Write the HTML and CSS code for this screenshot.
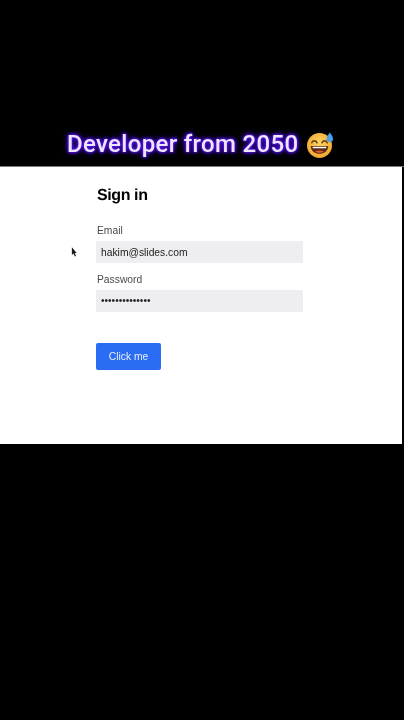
FILE: index.html
```
<!DOCTYPE html>
<html lang="en">
<head>
<meta charset="utf-8">
<title>Developer from 2050</title>
<link rel="stylesheet" href="styles.css">
</head>
<body>
<main class="screen">
  <header class="caption">
    <h2 class="caption-text">Developer from 2050</h2>
    <svg class="emoji" viewBox="0 0 28 28" aria-hidden="true">
      <defs>
        <radialGradient id="face" cx="50%" cy="40%" r="60%">
          <stop offset="0" stop-color="#fdd663"/>
          <stop offset="1" stop-color="#f2a52c"/>
        </radialGradient>
      </defs>
      <circle cx="13.5" cy="14.5" r="12.5" fill="url(#face)"/>
      <path d="M5.800 11.800c1-2.600 4.200-2.600 5.200 0M16 11.800c1-2.600 4.200-2.600 5.200 0" fill="none" stroke="#6b4518" stroke-width="1.600" stroke-linecap="round"/>
      <path d="M5.600 15h15.800c.6 0 .9.4.8 1-.6 4.200-4 6.800-8.700 6.800s-8.100-2.600-8.700-6.800c-.1-.6.2-1 .8-1z" fill="#5d2c12"/>
      <path d="M6.400 15.700h14.200l-.5 1.600H6.900z" fill="#fff"/>
      <path d="M9.300 20.700c1.300-1.300 7.100-1.300 8.400 0-2.400 1.400-6 1.400-8.400 0z" fill="#e8593d"/>
      <path d="M23.800 1.500c1.700 2.500 3.200 4.300 3.200 6.200a3.200 3.200 0 0 1-6.400 0c0-1.900 1.500-3.700 3.200-6.200z" fill="#4aa3e8"/>
    </svg>
  </header>
  <section class="panel">
    <svg class="cursor" viewBox="0 0 8 12" aria-hidden="true">
      <path d="M1 0l5.500 6.500H4.300l1.400 3.600-1.300.5-1.400-3.500L1 8.800z" fill="#1a1a1a"/>
    </svg>
    <form class="form">
      <h1 class="title">Sign in</h1>
      <label class="label label-email">Email</label>
      <div class="field">hakim@slides.com</div>
      <label class="label label-password">Password</label>
      <div class="field field-password">••••••••••••••</div>
      <button class="button" type="button">Click me</button>
    </form>
  </section>
</main>
</body>
</html>
```

FILE: styles.css
```
* { box-sizing: border-box; }
html, body { margin: 0; height: 100%; background: #000; }
.screen { width: 404px; height: 720px; background: #000; overflow: hidden; display: flex; flex-direction: column; }
.caption { height: 167px; padding: 0 0 4px 67px; display: flex; align-items: flex-end; gap: 8px; border-bottom: 1px solid #777; }
.caption-text {
  margin: 0; font: 500 24px/36px Roboto, sans-serif; letter-spacing: .33px; color: #ece6ff; white-space: nowrap;
  text-shadow: 0 0 2px #5a14f0, 0 0 3px #5a14f0, 0 0 4px #5010e0, 0 0 6px #5010e0;
  filter: blur(.3px);
}
.emoji { width: 28px; height: 28px; margin-bottom: 3px; filter: blur(.5px); }
.panel { position: relative; width: 402px; height: 277px; background: #fff; padding: 0 0 0 96px; }
.cursor { position: absolute; left: 71px; top: 80px; width: 7px; height: 11px; filter: blur(.4px); }
.form { width: 207px; display: flex; flex-direction: column; align-items: stretch; font-family: "Liberation Sans", Arial, sans-serif; filter: blur(.35px); }
.title { margin: 19px 0 0; padding-left: 1px; font-size: 16px; line-height: 20px; letter-spacing: -.4px; font-weight: 700; color: #000; text-rendering: geometricPrecision; }
.label { padding: 1px 0 0 1px; height: 14px; font-size: 10.300px; line-height: 14px; color: #4a4a4a; }
.label-email { margin-top: 17px; }
.label-password { margin-top: 9px; }
.field { height: 22px; margin-top: 4px; padding-left: 5px; background: #eeeef1; font-size: 10.300px; line-height: 23px; color: #222; }
.field-password { font-size: 10.100px; line-height: 22px; letter-spacing: 0; color: #222; }
.button { align-self: flex-start; width: 65px; height: 27px; margin-top: 31px; padding: 0; border: 0; border-radius: 2px; background: #2a6cf3; color: #e8f0ff; font: 10.300px "Liberation Sans", Arial, sans-serif; }
```
